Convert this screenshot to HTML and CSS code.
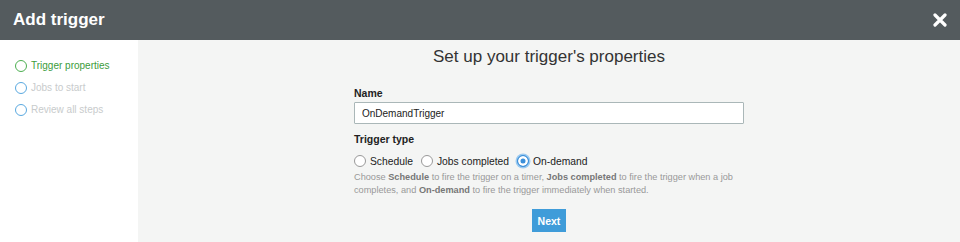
FILE: index.html
```html
<!DOCTYPE html>
<html>
<head>
<meta charset="utf-8">
<link rel="stylesheet" href="styles.css">
</head>
<body>
<div class="modal">
  <header class="header">
    <h1 class="title">Add trigger</h1>
    <button class="close" aria-label="Close">
      <svg width="14" height="14" viewBox="0 0 14 14"><path d="M2 2L12 12M12 2L2 12" stroke="#fff" stroke-width="3.2" stroke-linecap="round"/></svg>
    </button>
  </header>
  <div class="content">
    <nav class="steps">
      <div class="step active"><span class="dot"></span>Trigger properties</div>
      <div class="step"><span class="dot"></span>Jobs to start</div>
      <div class="step"><span class="dot"></span>Review all steps</div>
    </nav>
    <main class="main">
      <h2 class="heading">Set up your trigger's properties</h2>
      <div class="form">
        <label class="label">Name</label>
        <input class="input" type="text" value="OnDemandTrigger">
        <div class="label type-label">Trigger type</div>
        <div class="radios">
          <label class="radio"><span class="rb"></span>Schedule</label>
          <label class="radio"><span class="rb"></span>Jobs completed</label>
          <label class="radio"><span class="rb on"></span>On-demand</label>
        </div>
        <p class="help">Choose <b>Schedule</b> to fire the trigger on a timer, <b>Jobs completed</b> to fire the trigger when a job completes, and <b>On-demand</b> to fire the trigger immediately when started.</p>
        <div class="actions"><button class="next">Next</button></div>
      </div>
    </main>
  </div>
</div>
</body>
</html>
```
FILE: styles.css
```css
* { box-sizing: border-box; }
html, body { margin: 0; padding: 0; }
body { font-family: "Liberation Sans", Arial, sans-serif; width: 960px; height: 242px; overflow: hidden; background: #f4f5f4; }
.modal { display: flex; flex-direction: column; height: 242px; }
.header { height: 40px; background: #545b5e; display: flex; align-items: center; justify-content: space-between; padding: 0 13px 0 13px; flex-shrink: 0; }
.title { margin: 0; color: #fff; font-size: 17px; font-weight: bold; }
.close { background: none; border: 0; padding: 0; width: 14px; height: 14px; display: flex; margin-top: -1px; }
.content { display: flex; flex: 1; }
.steps { width: 138px; background: #fff; padding-top: 15px; padding-left: 15px; flex-shrink: 0; }
.step { display: flex; align-items: center; font-size: 10px; color: #c8cbcc; height: 22px; line-height: 14px; }
.step .dot { width: 12px; height: 12px; border: 1.5px solid #5aa9e0; border-radius: 50%; margin-right: 4px; flex-shrink: 0; }
.step.active { color: #3c9c3c; }
.step.active .dot { border-color: #4caf50; }
.main { flex: 1; display: flex; flex-direction: column; align-items: center; }
.heading { margin: 7px 0 0; font-size: 17px; font-weight: normal; color: #333; line-height: 20px; }
.form { width: 390px; margin-top: 20px; display: flex; flex-direction: column; }
.label { font-size: 10.5px; font-weight: bold; color: #222; line-height: 13px; }
.input { margin-top: 2px; height: 22px; border: 1px solid #aab7b8; background: #fff; font-family: inherit; font-size: 10px; color: #222; padding: 0 7px; border-radius: 1px; }
.type-label { margin-top: 9px; }
.radios { display: flex; margin-top: 8px; height: 14px; align-items: center; }
.radio { display: flex; align-items: center; font-size: 10.3px; color: #222; margin-right: 8px; }
.rb { width: 12px; height: 12px; border-radius: 50%; border: 1px solid #999; background: #fff; margin-right: 4px; }
.rb.on { border: 1px solid #3b8fd9; background: #3b8fd9; box-shadow: inset 0 0 0 2.5px #fff, 0 0 0 1.5px #9ccaf0; }
.help { margin: 3px 0 0; font-size: 9.2px; line-height: 13px; color: #999; }
.help b { color: #777; }
.actions { display: flex; justify-content: center; margin-top: 12px; }
.next { width: 34px; height: 23px; background: #3f9cd9; color: #fff; border: 0; font-family: inherit; font-size: 10.5px; font-weight: bold; padding: 0; }
```
